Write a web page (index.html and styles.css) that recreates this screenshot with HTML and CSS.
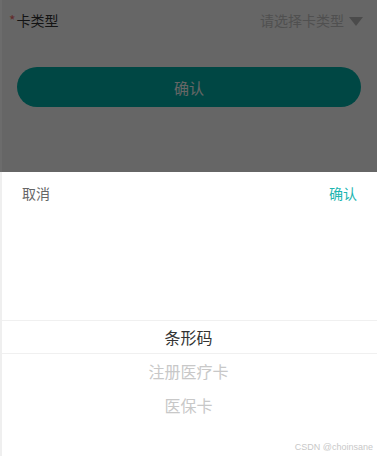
FILE: index.html
```html
<!DOCTYPE html>
<html lang="zh-CN">

<head>
    <meta charset="UTF-8">
    <meta name="viewport" content="width=device-width, initial-scale=1.0">
    <title>卡类型</title>
    <link rel="stylesheet" href="styles.css">
</head>

<body>

    <!-- Form behind the picker -->
    <div class="form">
        <div class="form-row">
            <div class="label"><span class="required">*</span>卡类型</div>
            <div class="select">
                <span class="placeholder">请选择卡类型</span>
                <span class="arrow"></span>
            </div>
        </div>

        <button class="submit">确认</button>
    </div>

    <div class="side-strip"></div>

    <!-- Dark mask over the form -->
    <div class="mask"></div>

    <!-- Bottom picker popup -->
    <div class="picker">
        <div class="picker-toolbar">
            <span class="cancel">取消</span>
            <span class="confirm">确认</span>
        </div>

        <div class="picker-body">
            <div class="picker-column">
                <div class="picker-item active">条形码</div>
                <div class="picker-item">注册医疗卡</div>
                <div class="picker-item">医保卡</div>
            </div>
            <div class="picker-frame"></div>
        </div>

        <div class="watermark">CSDN @choinsane</div>
    </div>

</body>

</html>
```

FILE: styles.css
```css
* {
    margin: 0;
    padding: 0;
    box-sizing: border-box;
}

body {
    font-family: "Noto Sans CJK SC", "Noto Sans", sans-serif;
    background-color: #fff;
    height: 456px;
    overflow: hidden;
}

.form-row {
    display: flex;
    justify-content: space-between;
    align-items: center;
    height: 40px;
    padding: 0 14px 0 9px;
    font-size: 14px;
}

.label {
    color: #333;
}

.required {
    color: #f56c6c;
    margin-right: 1px;
}

.select {
    display: flex;
    align-items: center;
    gap: 5px;
}

.placeholder {
    color: #c8c8c8;
}

/* Down triangle */
.arrow {
    width: 0;
    height: 0;
    border-left: 7px solid transparent;
    border-right: 7px solid transparent;
    border-top: 9px solid #bbb;
    margin-top: 2px;
}

.submit {
    display: block;
    width: 344px;
    height: 40px;
    margin: 27px 0 0 17px;
    border: none;
    border-radius: 20px;
    background-color: #00b2aa;
    color: #fff;
    font-family: inherit;
    font-size: 15px;
}

.side-strip {
    position: fixed;
    top: 0;
    left: 0;
    width: 2px;
    height: 100%;
    background: linear-gradient(#6c6c6c 0, #6c6c6c 172px, #efefef 172px);
    z-index: 30;
}

.mask {
    position: fixed;
    top: 0;
    left: 0;
    right: 0;
    bottom: 0;
    background-color: rgba(0, 0, 0, 0.6);
    z-index: 10;
}

.picker {
    position: fixed;
    left: 0;
    right: 0;
    bottom: 0;
    height: 284px;
    background-color: #fff;
    z-index: 20;
}

.picker-toolbar {
    display: flex;
    justify-content: space-between;
    align-items: center;
    height: 41px;
    padding: 0 20px 0 22px;
    font-size: 14px;
}

.cancel {
    color: #666;
}

.confirm {
    color: #1cb5b0;
}

.picker-body {
    position: relative;
    height: 243px;
    overflow: hidden;
}

.picker-column {
    padding-top: 107px;
}

.picker-item {
    height: 34px;
    line-height: 34px;
    text-align: center;
    font-size: 16px;
    color: #c8c8c8;
}

.picker-item.active {
    color: #333;
}

/* Lines around the selected row */
.picker-frame {
    position: absolute;
    left: 0;
    right: 0;
    top: 107px;
    height: 34px;
    border-top: 1px solid #f0f0f0;
    border-bottom: 1px solid #f0f0f0;
}

.watermark {
    position: absolute;
    right: 4px;
    bottom: 4px;
    font-family: "Liberation Sans", Arial, sans-serif;
    font-size: 9px;
    color: #c8c8c8;
}
```
